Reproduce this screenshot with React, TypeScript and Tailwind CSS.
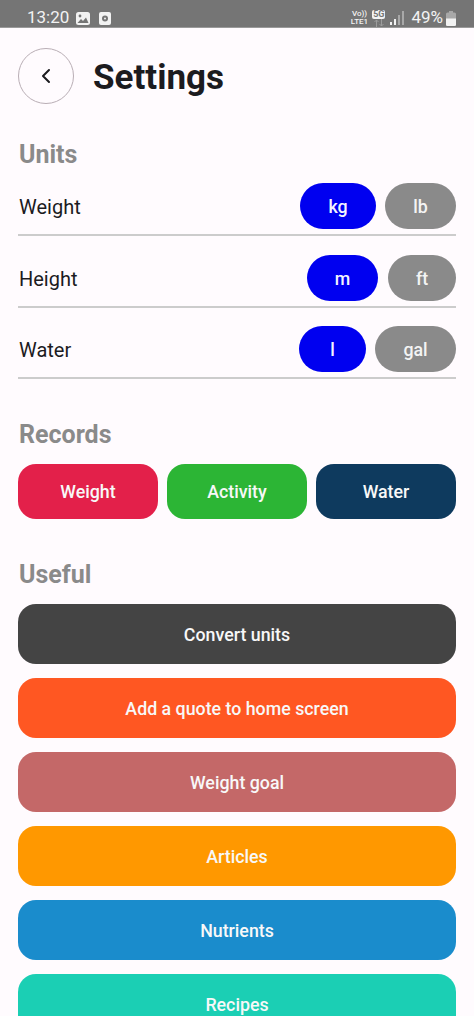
import { ChevronLeft } from "lucide-react";

function UnitRow({ label, a, aw, b, bw, gap }: { label: string; a: string; aw: string; b: string; bw: string; gap: string }) {
  return (
    <div className="flex flex-col h-[71.5px]">
      <div className="flex items-center justify-between h-[46px]">
        <span className="text-[20px] text-[#1c1b1f] pl-px pt-0.5">{label}</span>
        <div className={`flex ${gap}`}>
          <div className={`${aw} h-[46px] rounded-[23px] bg-[#0000f0] text-[#f4f4ff] text-[17.8px] font-medium pt-[3px] flex items-center justify-center`}>{a}</div>
          <div className={`${bw} h-[46px] rounded-[23px] bg-[#8a8a8a] text-[#f4f4f4] text-[17.8px] font-medium pt-[3px] flex items-center justify-center`}>{b}</div>
        </div>
      </div>
      <div className="h-[2px] mt-[5px] bg-[#cccccc]" />
    </div>
  );
}

function Wide({ label, bg }: { label: string; bg: string }) {
  return (
    <div className={`${bg} h-[60px] shrink-0 rounded-[18px] text-[#f8f8f8] text-[17.8px] font-medium pt-[3px] flex items-center justify-center`}>{label}</div>
  );
}

export default function App() {
  return (
    <div className="w-[474px] h-[1016px] overflow-hidden bg-[#fffbfe] font-['Roboto',sans-serif]">
      <div className="h-[28px] bg-[#757575] border-b border-[#9a9a9a] flex items-center justify-between pt-[9px] pl-[27px] pr-[18px] text-[#f2f2f2]">
        <div className="flex items-center gap-[7px]">
          <span className="text-[17px]">13:20</span>
          <svg width="14" height="13" viewBox="0 0 14 13">
            <rect width="14" height="13" rx="2.5" fill="#f2f2f2" />
            <circle cx="4" cy="4" r="1.4" fill="#757575" />
            <path d="M1.5 11 L5 7 L7 9 L10 5.5 L12.5 11 Z" fill="#757575" />
          </svg>
          <svg width="12" height="13" viewBox="0 0 12 13" className="ml-[2px]">
            <rect width="12" height="13" rx="2" fill="#f2f2f2" />
            <circle cx="6" cy="6.5" r="3" fill="#757575" />
            <circle cx="6" cy="6.5" r="1" fill="#f2f2f2" />
          </svg>
        </div>
        <div className="flex items-center">
          <div className="flex flex-col text-[8px] leading-[8px] font-medium items-center mr-[4px]">
            <span>Vo))</span>
            <span>LTE1</span>
          </div>
          <div className="flex flex-col items-center mr-[5px]">
            <span className="bg-[#f2f2f2] text-[#757575] text-[9px] leading-[9px] font-bold rounded-[2px] px-[1px]">5G</span>
            <svg width="12" height="8" viewBox="0 0 12 8">
              <path d="M3.5 8V1M1.5 3l2-2 2 2M8.5 0v7M6.5 5l2 2 2-2" stroke="#9c9c9c" strokeWidth="1" fill="none" />
            </svg>
          </div>
          <svg width="14" height="14" viewBox="0 0 14 14" className="mr-[7px]">
            <rect x="0" y="11" width="2" height="3" fill="#f2f2f2" />
            <rect x="4" y="8" width="2" height="6" fill="#f2f2f2" />
            <rect x="8" y="4" width="2" height="10" fill="#a8a8a8" />
            <rect x="12" y="0" width="2" height="14" fill="#a8a8a8" />
          </svg>
          <span className="text-[17px] mr-[3px]">49%</span>
          <svg width="10" height="15" viewBox="0 0 10 15">
            <path d="M3 0h4v1.5h1.5a1.5 1.5 0 0 1 1.5 1.5v10.5a1.5 1.5 0 0 1-1.5 1.5h-7A1.5 1.5 0 0 1 0 13.5V3a1.5 1.5 0 0 1 1.5-1.5H3z" fill="#a8a8a8" />
            <path d="M0 7.5h10v6a1.5 1.5 0 0 1-1.5 1.5h-7A1.5 1.5 0 0 1 0 13.5z" fill="#f2f2f2" />
          </svg>
        </div>
      </div>

      <div className="px-[18px]">
        <div className="flex items-center gap-[19px] mt-5 h-[56px]">
          <div className="w-[56px] h-[56px] rounded-full border border-[#b9aeb5] flex items-center justify-center">
            <ChevronLeft size={24} strokeWidth={2} className="text-[#1c1b1f]" />
          </div>
          <h1 className="text-[35px] font-bold text-[#1c1b1f] pt-1">Settings</h1>
        </div>

        <h2 className="text-[25px] font-bold text-[#8a8a8a] mt-[30px] pl-px pt-px h-[40px] leading-[40px]">Units</h2>
        <div className="mt-[9px]">
          <UnitRow label="Weight" a="kg" aw="w-[76px]" b="lb" bw="w-[71px]" gap="gap-[9px]" />
          <UnitRow label="Height" a="m" aw="w-[71px]" b="ft" bw="w-[68px]" gap="gap-[10px]" />
          <UnitRow label="Water" a="l" aw="w-[67px]" b="gal" bw="w-[81px]" gap="gap-[9px]" />
        </div>

        <h2 className="text-[25px] font-bold text-[#8a8a8a] mt-[15.5px] pl-px pt-0.5 h-[40px] leading-[40px]">Records</h2>
        <div className="flex gap-[9px] mt-[10.5px]">
          <div className="flex-1 h-[55px] rounded-[18px] bg-[#e3204a] text-[#f8f8f8] text-[17.8px] font-medium pt-[3px] flex items-center justify-center">Weight</div>
          <div className="flex-1 h-[55px] rounded-[18px] bg-[#2cb535] text-[#f8f8f8] text-[17.8px] font-medium pt-[3px] flex items-center justify-center">Activity</div>
          <div className="flex-1 h-[55px] rounded-[18px] bg-[#0e3a5e] text-[#f8f8f8] text-[17.8px] font-medium pt-[3px] flex items-center justify-center">Water</div>
        </div>

        <h2 className="text-[25px] font-bold text-[#8a8a8a] mt-[39.5px] pl-px pt-0.5 h-[30px] leading-[30px]">Useful</h2>
        <div className="flex flex-col gap-[14px] mt-[16px]">
          <Wide label="Convert units" bg="bg-[#444444]" />
          <Wide label="Add a quote to home screen" bg="bg-[#ff5722]" />
          <Wide label="Weight goal" bg="bg-[#c46868]" />
          <Wide label="Articles" bg="bg-[#ff9800]" />
          <Wide label="Nutrients" bg="bg-[#1a8ccc]" />
          <Wide label="Recipes" bg="bg-[#1bcfb4]" />
        </div>
      </div>
    </div>
  );
}
